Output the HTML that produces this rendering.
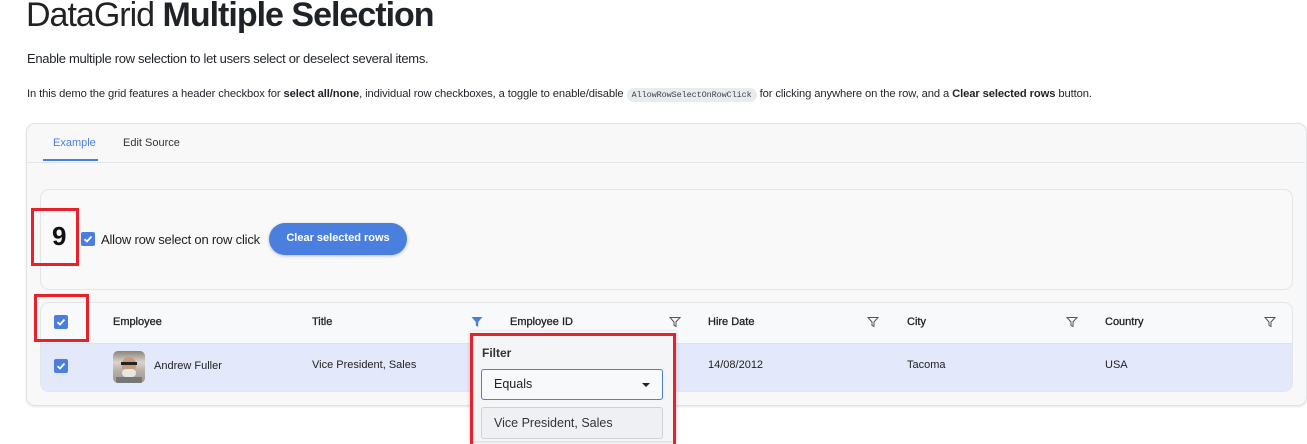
<!DOCTYPE html>
<html><head><style>
body{margin:0;width:1307px;height:441px;overflow:hidden;background:#fff;font-family:"Liberation Sans",sans-serif;color:#1f2328;position:relative}
.a{position:absolute;white-space:nowrap}
.cb{position:absolute;width:14px;height:14px;background:#4a7fe0;border-radius:2px}
.cb svg{position:absolute;left:2px;top:2px}
.fi{position:absolute;width:12px;height:12px}
.hd{position:absolute;font-size:11px;color:#222;top:316px;-webkit-text-stroke:0.3px #222}
.td{position:absolute;font-size:11px;color:#222;top:360px}
</style></head><body>
<div class="a" style="left:26px;top:-4px;font-size:34px;letter-spacing:-1px"><span style="font-weight:300;color:#222">DataGrid</span> <b>Multiple Selection</b></div>
<div class="a" style="left:27px;top:51px;font-size:13px;letter-spacing:-0.3px">Enable multiple row selection to let users select or deselect several items.</div>
<div class="a" style="left:27px;top:88px;font-size:11.2px;letter-spacing:-0.1px">In this demo the grid features a header checkbox for <b>select all/none</b>, individual row checkboxes, a toggle to enable/disable <span style="font-family:'Liberation Mono',monospace;font-size:8.5px;background:#e8ebf0;border-radius:8px;padding:2px 5px;color:#444">AllowRowSelectOnRowClick</span> for clicking anywhere on the row, and a <b>Clear selected rows</b> button.</div>
<div class="a" style="left:26px;top:123px;width:1279px;height:281px;border:1px solid #dfe2e6;border-radius:9px;background:#f8f8f9;box-shadow:0 1px 2px rgba(0,0,0,.1)"></div>
<div class="a" style="left:27px;top:162px;width:1278px;height:1px;background:#e2e5ea"></div>
<div class="a" style="left:53px;top:137px;font-size:11px;color:#4a7fe0">Example</div>
<div class="a" style="top:159px;height:2px;background:#4a7fe0;left:43px;width:55px"></div>
<div class="a" style="left:123px;top:137px;font-size:11px;color:#333">Edit Source</div>
<div class="a" style="left:40px;top:189px;width:1251px;height:99px;border:1px solid #e2e5ea;border-radius:9px;background:#f9f9fa"></div>
<div class="a" style="left:52px;top:221px;font-size:26px;font-weight:bold;color:#111">9</div>
<div class="a" style="left:31px;top:208px;width:42px;height:52px;border:3px solid #e8202a"></div>
<div class="cb" style="left:81px;top:232px"><svg width="10" height="10" viewBox="0 0 10 10"><path d="M1.5 5.2L4 7.5L8.5 2.5" stroke="#fff" stroke-width="1.8" fill="none"/></svg></div>
<div class="a" style="left:101px;top:232px;font-size:13px;color:#222;letter-spacing:-0.2px">Allow row select on row click</div>
<div class="a" style="left:269px;top:223px;width:138px;height:32px;border-radius:16px;background:#4a7fe0;box-shadow:0 1px 3px rgba(0,0,0,.25);color:#fff;font-size:11px;font-weight:bold;text-align:center;line-height:31px">Clear selected rows</div>
<div class="a" style="left:40px;top:302px;width:1251px;height:88px;border:1px solid #e2e5ea;border-radius:9px;background:#f8f9fb;overflow:hidden">
 <div style="position:absolute;left:0;top:40px;width:100%;height:48px;background:#e3e8fb;border-top:1px solid #dde1ea"></div>
</div>
<div class="cb" style="left:54px;top:315px"><svg width="10" height="10" viewBox="0 0 10 10"><path d="M1.5 5.2L4 7.5L8.5 2.5" stroke="#fff" stroke-width="1.8" fill="none"/></svg></div>
<div class="a" style="left:34px;top:294px;width:49px;height:42px;border:3px solid #e8202a"></div>
<div class="hd" style="left:113px">Employee</div>
<div class="hd" style="left:312px">Title</div>
<div class="hd" style="left:510px">Employee ID</div>
<div class="hd" style="left:708px">Hire Date</div>
<div class="hd" style="left:907px">City</div>
<div class="hd" style="left:1105px">Country</div>
<svg class="fi" style="left:471px;top:316px" viewBox="0 0 12 12"><path d="M0.5 1h11L7.2 6v5L4.8 9.5V6z" fill="#4a7fe0"/></svg>
<svg class="fi" style="left:669px;top:316px" viewBox="0 0 12 12"><path d="M1 1.5h10L7 6v4.5L5 9.5V6z" fill="none" stroke="#555" stroke-width="1"/></svg>
<svg class="fi" style="left:867px;top:316px" viewBox="0 0 12 12"><path d="M1 1.5h10L7 6v4.5L5 9.5V6z" fill="none" stroke="#555" stroke-width="1"/></svg>
<svg class="fi" style="left:1066px;top:316px" viewBox="0 0 12 12"><path d="M1 1.5h10L7 6v4.5L5 9.5V6z" fill="none" stroke="#555" stroke-width="1"/></svg>
<svg class="fi" style="left:1264px;top:316px" viewBox="0 0 12 12"><path d="M1 1.5h10L7 6v4.5L5 9.5V6z" fill="none" stroke="#555" stroke-width="1"/></svg>
<div class="cb" style="left:54px;top:359px"><svg width="10" height="10" viewBox="0 0 10 10"><path d="M1.5 5.2L4 7.5L8.5 2.5" stroke="#fff" stroke-width="1.8" fill="none"/></svg></div>
<div class="a" style="left:113px;top:351px;width:32px;height:32px;border-radius:5px;background:linear-gradient(180deg,#8a8378 0%,#d9d4cc 35%,#b9b2a8 60%,#9b9590 100%);overflow:hidden"><div style="position:absolute;left:9px;top:6px;width:14px;height:16px;border-radius:7px;background:#c89a80"></div><div style="position:absolute;left:8px;top:11px;width:16px;height:3px;background:#222"></div><div style="position:absolute;left:9px;top:18px;width:14px;height:8px;border-radius:6px;background:#e8e6e2"></div><div style="position:absolute;left:3px;top:26px;width:26px;height:8px;background:#777"></div></div>
<div class="td" style="left:154px;top:360px">Andrew Fuller</div>
<div class="td" style="left:312px;top:359px">Vice President, Sales</div>
<div class="td" style="left:708px;top:359px">14/08/2012</div>
<div class="td" style="left:907px;top:359px">Tacoma</div>
<div class="td" style="left:1105px;top:359px">USA</div>
<div class="a" style="left:470px;top:331px;width:206px;height:110px;background:#f4f5f7;box-shadow:0 1px 4px rgba(0,0,0,.2)"></div>
<div class="a" style="left:470px;top:333px;width:200px;height:108px;border:3px solid #e8202a;border-bottom:none"></div>
<div class="a" style="left:482px;top:346px;font-size:12px;font-weight:bold;color:#333">Filter</div>
<div class="a" style="left:481px;top:369px;width:180px;height:29px;border:1.5px solid #4a7fe0;border-radius:3px;background:#f8f9fb"></div>
<div class="a" style="left:494px;top:377px;font-size:12.5px;color:#222">Equals</div>
<div class="a" style="left:642px;top:383px;width:0;height:0;border-left:4px solid transparent;border-right:4px solid transparent;border-top:4px solid #222"></div>
<div class="a" style="left:481px;top:407px;width:180px;height:30px;border:1px solid #cdd1d8;border-radius:3px;background:#eef0f3"></div>
<div class="a" style="left:494px;top:416px;font-size:12.5px;color:#333">Vice President, Sales</div>
</body></html>
